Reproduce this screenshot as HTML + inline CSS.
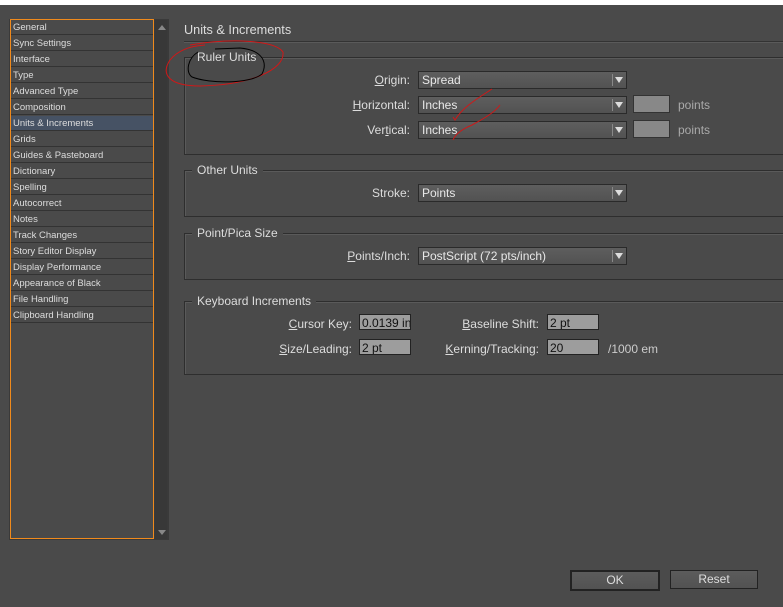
<!DOCTYPE html><html><head><style>
body{margin:0;width:783px;height:607px;background:#4a4a4a;position:relative;overflow:hidden;font-family:"Liberation Sans",sans-serif;color:#d8d8d8;}
.a{position:absolute}
.li{position:absolute;left:11px;width:142px;height:15px;border-bottom:1px solid #333;font-size:9.5px;line-height:15px;padding-left:2px;box-sizing:border-box;color:#ddd}
.grp{position:absolute;left:184px;width:599px;border:1px solid #2e2e2e;border-right:none;box-shadow:inset 1px 1px 0 #5a5a5a}
.gt{position:absolute;background:#4a4a4a;padding:0 5px;font-size:12px;color:#ddd}
.lbl{position:absolute;font-size:12px;text-align:right;color:#ddd}
.dd{position:absolute;height:16px;background:linear-gradient(#5e5e5e,#525252);border:1px solid #2a2a2a;font-size:12px;line-height:16px;padding-left:3px;box-sizing:content-box;color:#e8e8e8}
.dd:after{content:"";position:absolute;right:3px;top:5px;border-left:4px solid transparent;border-right:4px solid transparent;border-top:6px solid #ddd}
.dd:before{content:"";position:absolute;right:13px;top:2px;width:1px;height:12px;background:#888}
.sb{position:absolute;width:35px;height:16px;background:#888;border:1px solid #333}
.fi{position:absolute;width:52px;height:16px;background:#9d9d9d;border:1px solid #222;font-size:12px;line-height:16px;color:#111;padding-left:2px;box-sizing:border-box;overflow:hidden;white-space:nowrap}
.btn{position:absolute;height:17px;background:linear-gradient(#5c5c5c,#525252);border:1px solid #222;font-size:12px;text-align:center;line-height:17px;color:#ddd}
u{text-decoration:underline}
</style></head><body>
<div class="a" style="left:0;top:0;width:783px;height:5px;background:#fff"></div>
<div class="a" style="left:9px;top:19px;width:160px;height:521px;background:#3a3a3a"></div>
<div class="a" style="left:10px;top:19px;width:142px;height:518px;border:1px solid #f08a1c;background:#4a4a4a"></div>
<div class="a" style="left:155px;top:20px;width:12px;height:519px;background:#383838"></div>
<div class="a" style="left:158px;top:25px;border-left:4px solid transparent;border-right:4px solid transparent;border-bottom:5px solid #888"></div>
<div class="a" style="left:158px;top:530px;border-left:4px solid transparent;border-right:4px solid transparent;border-top:5px solid #888"></div>
<div class="li" style="top:20px">General</div>
<div class="li" style="top:36px">Sync Settings</div>
<div class="li" style="top:52px">Interface</div>
<div class="li" style="top:68px">Type</div>
<div class="li" style="top:84px">Advanced Type</div>
<div class="li" style="top:100px">Composition</div>
<div class="li" style="top:116px;background:#465264">Units &amp; Increments</div>
<div class="li" style="top:132px">Grids</div>
<div class="li" style="top:148px">Guides &amp; Pasteboard</div>
<div class="li" style="top:164px">Dictionary</div>
<div class="li" style="top:180px">Spelling</div>
<div class="li" style="top:196px">Autocorrect</div>
<div class="li" style="top:212px">Notes</div>
<div class="li" style="top:228px">Track Changes</div>
<div class="li" style="top:244px">Story Editor Display</div>
<div class="li" style="top:260px">Display Performance</div>
<div class="li" style="top:276px">Appearance of Black</div>
<div class="li" style="top:292px">File Handling</div>
<div class="li" style="top:308px">Clipboard Handling</div>

<div class="a" style="left:184px;top:23px;font-size:12.7px;color:#ddd">Units &amp; Increments</div>
<div class="a" style="left:184px;top:41px;width:599px;height:1px;background:#333;border-bottom:1px solid #5a5a5a"></div>

<div class="grp" style="top:57px;height:96px"></div>
<div class="gt" style="left:192px;top:50px">Ruler Units</div>
<div class="lbl" style="left:330px;width:80px;top:73px"><u>O</u>rigin:</div>
<div class="dd" style="left:418px;top:71px;width:204px">Spread</div>
<div class="lbl" style="left:330px;width:80px;top:98px"><u>H</u>orizontal:</div>
<div class="dd" style="left:418px;top:96px;width:204px">Inches</div>
<div class="sb" style="left:633px;top:95px"></div>
<div class="a" style="left:678px;top:98px;font-size:12px;color:#aaa">points</div>
<div class="lbl" style="left:330px;width:80px;top:123px">Ver<u>t</u>ical:</div>
<div class="dd" style="left:418px;top:121px;width:204px">Inches</div>
<div class="sb" style="left:633px;top:120px"></div>
<div class="a" style="left:678px;top:123px;font-size:12px;color:#aaa">points</div>

<div class="grp" style="top:170px;height:45px"></div>
<div class="gt" style="left:192px;top:163px">Other Units</div>
<div class="lbl" style="left:330px;width:80px;top:186px">Stroke:</div>
<div class="dd" style="left:418px;top:184px;width:204px">Points</div>

<div class="grp" style="top:233px;height:45px"></div>
<div class="gt" style="left:192px;top:226px">Point/Pica Size</div>
<div class="lbl" style="left:300px;width:110px;top:249px"><u>P</u>oints/Inch:</div>
<div class="dd" style="left:418px;top:247px;width:204px">PostScript (72 pts/inch)</div>

<div class="grp" style="top:301px;height:72px"></div>
<div class="gt" style="left:192px;top:294px">Keyboard Increments</div>
<div class="lbl" style="left:260px;width:92px;top:317px"><u>C</u>ursor Key:</div>
<div class="fi" style="left:359px;top:314px">0.0139 in</div>
<div class="lbl" style="left:260px;width:92px;top:342px"><u>S</u>ize/Leading:</div>
<div class="fi" style="left:359px;top:339px">2 pt</div>
<div class="lbl" style="left:420px;width:119px;top:317px"><u>B</u>aseline Shift:</div>
<div class="fi" style="left:547px;top:314px">2 pt</div>
<div class="lbl" style="left:420px;width:119px;top:342px"><u>K</u>erning/Tracking:</div>
<div class="fi" style="left:547px;top:339px">20</div>
<div class="a" style="left:608px;top:342px;font-size:12px;color:#ccc">/1000 em</div>

<div class="btn" style="left:570px;top:570px;width:86px;border:2px solid #222">OK</div>
<div class="btn" style="left:670px;top:570px;width:86px">Reset</div>

<svg class="a" style="left:0;top:0" width="783" height="607">
<path d="M190 45 C230 38 275 40 283 52 C285 70 250 85 200 86 C170 86 160 75 170 60 C178 50 190 46 205 45" fill="none" stroke="#d01818" stroke-width="1"/>
<path d="M198 52 C188 58 185 72 192 77 C210 84 250 84 262 74 C268 62 262 50 240 48 L215 49" fill="none" stroke="#000" stroke-width="1"/>
<path d="M453 117 L455 120 C462 108 475 100 492 89" fill="none" stroke="#d01818" stroke-width="1"/>
<path d="M453 140 C455 135 460 130 472 125 C485 118 495 112 500 105" fill="none" stroke="#d01818" stroke-width="1"/>
</svg>
</body></html>
